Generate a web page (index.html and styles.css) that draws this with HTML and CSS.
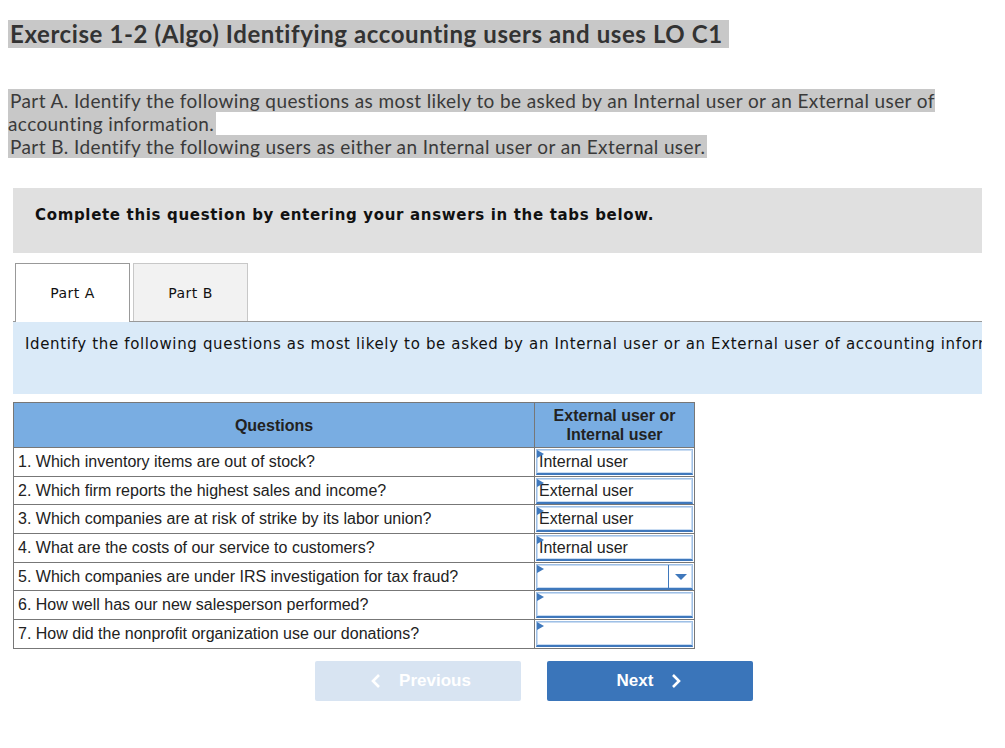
FILE: index.html
```html
<!DOCTYPE html>
<html>
<head>
<meta charset="utf-8">
<link rel="stylesheet" href="styles.css">
</head>
<body>
<h1 class="title"><span class="hl">Exercise 1-2 (Algo) Identifying accounting users and uses LO C1</span></h1>
<p class="intro"><span class="hl">Part A. Identify the following questions as most likely to be asked by an Internal user or an External user of accounting information. </span><br><span class="hl">Part B. Identify the following users as either an Internal user or an External user.</span></p>

<div class="question">
  <div class="instructions">Complete this question by entering your answers in the tabs below.</div>
  <div class="tabs">
    <div class="tab active">Part A</div>
    <div class="tab">Part B</div>
  </div>
  <div class="panel">
    <div class="panel-text">Identify the following questions as most likely to be asked by an Internal user or an External user of accounting information.</div>
  </div>

  <table class="grid">
    <thead>
      <tr><th class="qcol">Questions</th><th class="acol">External user or<br>Internal user</th></tr>
    </thead>
    <tbody>
      <tr><td class="q">1. Which inventory items are out of stock?</td><td class="a"><div class="inp"><span class="flag"></span>Internal user</div></td></tr>
      <tr><td class="q">2. Which firm reports the highest sales and income?</td><td class="a"><div class="inp"><span class="flag"></span>External user</div></td></tr>
      <tr><td class="q">3. Which companies are at risk of strike by its labor union?</td><td class="a"><div class="inp"><span class="flag"></span>External user</div></td></tr>
      <tr><td class="q">4. What are the costs of our service to customers?</td><td class="a"><div class="inp"><span class="flag"></span>Internal user</div></td></tr>
      <tr><td class="q">5. Which companies are under IRS investigation for tax fraud?</td><td class="a"><div class="inp select"><span class="flag"></span><span class="caret"><svg width="12" height="7" viewBox="0 0 12 7"><polygon points="0,0 12,0 6,6" fill="#3f78bc"/></svg></span></div></td></tr>
      <tr><td class="q">6. How well has our new salesperson performed?</td><td class="a"><div class="inp"><span class="flag"></span></div></td></tr>
      <tr><td class="q">7. How did the nonprofit organization use our donations?</td><td class="a"><div class="inp"><span class="flag"></span></div></td></tr>
    </tbody>
  </table>

  <div class="nav">
    <button class="btn prev"><svg width="10" height="16" viewBox="0 0 10 16"><polyline points="8,2 2,8 8,14" fill="none" stroke="#fff" stroke-width="2.6"/></svg><span>Previous</span></button>
    <button class="btn next"><span>Next</span><svg width="10" height="16" viewBox="0 0 10 16"><polyline points="2,2 8,8 2,14" fill="none" stroke="#fff" stroke-width="2.6"/></svg></button>
  </div>
</div>
</body>
</html>
```
FILE: styles.css
```css
html, body { margin: 0; padding: 0; background: #fff; }
body { margin: 8px; font-family: "Liberation Sans", Arial, sans-serif; }

.title {
  margin: 12px 0 0 0;
  font-family: Lato, "Open Sans", sans-serif;
  font-weight: 700;
  font-size: 24px;
  letter-spacing: 0.6px;
  line-height: 28px;
  color: #333;
}
.hl { background: #c8c8c8; }
.title .hl { padding: 0 6px 0 2px; display: inline-block; }

.intro {
  margin: 41px 0 0 0;
  font-family: Lato, "Open Sans", sans-serif;
  font-size: 19px;
  letter-spacing: 0.4px;
  line-height: 23px;
  color: #3a3a3a;
}
.intro .hl { padding: 0 2px; }

.question { margin: 30px 0 0 5px; width: 969px; }

.instructions {
  background: #e0e0e0;
  height: 65px;
  box-sizing: border-box;
  padding: 17px 22px 0;
  font-family: "DejaVu Sans", Verdana, sans-serif;
  font-weight: 700;
  font-size: 15px;
  letter-spacing: 0.67px;
  line-height: 20px;
  color: #111;
}

.tabs {
  display: flex;
  gap: 3px;
  margin-top: 10px;
  padding-left: 2px;
  border-bottom: 1px solid #999;
  height: 58px;
}
.tab {
  width: 115px;
  box-sizing: border-box;
  border: 1px solid #c8c8c8;
  border-bottom: none;
  background: #f2f2f2;
  display: flex;
  align-items: center;
  justify-content: center;
  font-family: "DejaVu Sans", Verdana, sans-serif;
  font-size: 14px;
  letter-spacing: 0.5px;
  color: #111;
}
.tab.active {
  background: #fff;
  border-color: #999;
  height: 59px;
  position: relative;
  z-index: 1;
}

.panel {
  background: #daeaf8;
  height: 72px;
  overflow: hidden;
  box-sizing: border-box;
  padding: 12px 0 0 12px;
}
.panel-text {
  white-space: nowrap;
  font-family: "DejaVu Sans", Verdana, sans-serif;
  font-size: 15px;
  letter-spacing: 0.65px;
  line-height: 20px;
  color: #111;
}

.grid {
  margin-top: 8px;
  border-collapse: collapse;
  width: 680px;
  table-layout: fixed;
  font-size: 16px;
  color: #222;
}
.grid th {
  background: #79ade2;
  border: 1px solid #777;
  font-weight: 700;
  font-size: 16px;
  line-height: 19px;
  height: 44px;
  padding: 0;
  color: #222;
}
.grid th.qcol { width: 520px; }
.grid th.acol { width: 159px; }
.grid td {
  border: 1px solid #777;
  height: 27.7px;
  padding: 0;
  box-sizing: border-box;
}
.grid tbody tr { height: 28.7px; }
.grid td.q { padding-left: 4px; }
.grid td.a { padding: 1px 0 0 1px; vertical-align: top; }

.inp {
  position: relative;
  height: 26px;
  box-sizing: border-box;
  border: 1px solid #9fc0e6;
  border-bottom: 2px solid #3f78bc;
  box-shadow: inset 0 0 0 1px #c9dcf2;
  background: #fff;
  padding-left: 2px;
  line-height: 23px;
  font-size: 16px;
  color: #222;
  margin-right: 1px;
}
.flag {
  position: absolute;
  left: 0;
  top: 0;
  width: 0;
  height: 0;
  border-top: 4px solid transparent;
  border-bottom: 4px solid transparent;
  border-left: 7px solid #3f78bc;
}
.inp.select { display: flex; justify-content: flex-end; }
.caret {
  width: 23px;
  border-left: 1px solid #3f78bc;
  display: flex;
  align-items: center;
  justify-content: center;
  padding-top: 2px;
}

.nav {
  display: flex;
  gap: 26px;
  margin-top: 12px;
  padding-left: 302px;
}
.btn {
  width: 206px;
  height: 40px;
  border: none;
  border-radius: 2px;
  display: flex;
  align-items: center;
  justify-content: center;
  gap: 18px;
  font-family: "Liberation Sans", Arial, sans-serif;
  font-weight: 700;
  font-size: 17px;
  color: #fff;
  padding: 0;
}
.btn.prev { background: #d8e4f2; padding-left: 6px; }
.btn.next { background: #3a75ba; padding-right: 2px; }
```
